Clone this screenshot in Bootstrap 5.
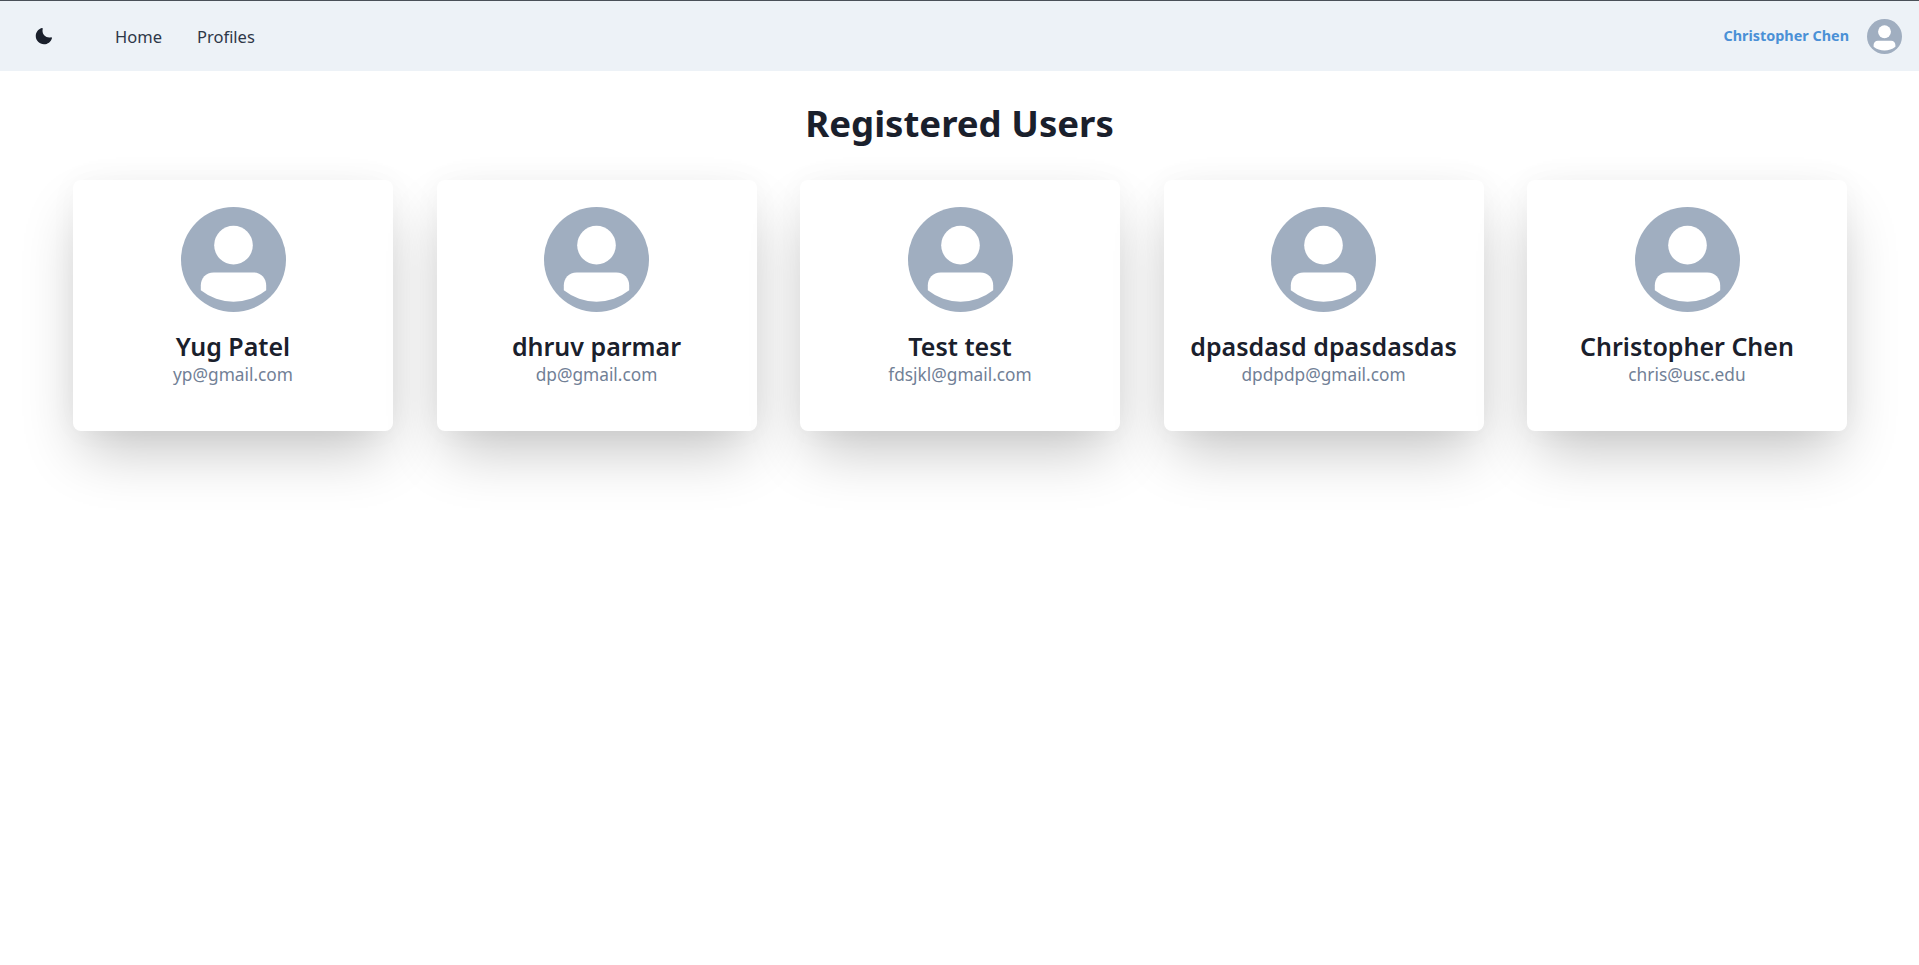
<!DOCTYPE html>
<html lang="en">
<head>
<meta charset="utf-8">
<title>Registered Users</title>
<link href="https://cdn.jsdelivr.net/npm/bootstrap@5.3.0/dist/css/bootstrap.min.css" rel="stylesheet">
<style>
body { font-family: "Noto Sans", "Open Sans", sans-serif; color: #1a202c; background: #fff; }
.top-bar { height: 71px; background: #edf2f7; border-top: 1px solid #4a5058; padding: 0 17px 0 35px; }
.moon { width: 18px; height: 18px; display: block; }
.top-link { color: #2d3748; font-size: 16.5px; text-decoration: none; line-height: 24px; }
.top-links { margin-left: 62px; gap: 35px; padding-top: 2px; }
.me-name { color: #4a90d6; font-size: 14.4px; font-weight: 700; }
.me-pic { width: 35px; height: 35px; display: block; margin-left: 18px; }
.page-title { font-size: 36.6px; font-weight: 700; line-height: 48px; margin: 28px 0 0; color: #1a202c; }
.people { margin-top: 33px; gap: 43.5px; padding-left: 1px; }
.person { width: 320px; height: 251px; background: #fff; border-radius: 8px; padding-top: 27px; box-shadow: 0 28px 56px -10px rgba(0,0,0,.24), 0 0 30px rgba(0,0,0,.03); }
.person-pic { width: 105px; height: 105px; display: block; }
.person-name { font-size: 25px; font-weight: 600; line-height: 32px; margin: 18px 0 0; color: #1a202c; }
.person-mail { font-size: 17.3px; line-height: 24px; color: #718096; margin: 1px 0 0; }
</style>
</head>
<body class="min-vh-100">
<nav class="top-bar d-flex align-items-center">
  <svg class="moon" viewBox="0 0 24 24"><path fill="#1a202c" d="M21.4,13.7C20.6,13.9,19.8,14,19,14c-5,0-9-4-9-9c0-0.8,0.1-1.6,0.3-2.4c0.1-0.3,0-0.7-0.3-1c-0.3-0.3-0.6-0.4-1-0.3C4.3,2.7,1,7.1,1,12c0,6.1,4.9,11,11,11c4.9,0,9.3-3.3,10.6-8.1c0.1-0.3,0-0.7-0.3-1C22.1,13.7,21.7,13.6,21.4,13.7z"/></svg>
  <div class="top-links d-flex">
    <a class="top-link" href="#">Home</a>
    <a class="top-link" href="#">Profiles</a>
  </div>
  <div class="ms-auto d-flex align-items-center">
    <span class="me-name">Christopher Chen</span>
    <svg class="me-pic" viewBox="0 0 106 106"><use href="#avatar"/></svg>
  </div>
</nav>
<svg width="0" height="0" class="position-absolute"><defs><g id="avatar">
  <circle cx="53" cy="53" r="53" fill="#a0aec0"/>
  <circle cx="53" cy="38.5" r="19.5" fill="#fff"/>
  <path fill="#fff" d="M33 66H73C81 66 86 72 86 79V84A53 53 0 0 1 20 84V79C20 72 25 66 33 66Z"/>
</g></defs></svg>
<main>
  <h1 class="page-title text-center">Registered Users</h1>
  <div class="people d-flex justify-content-center">
    <div class="person d-flex flex-column align-items-center"><svg class="person-pic" viewBox="0 0 106 106"><use href="#avatar"/></svg><p class="person-name">Yug Patel</p><p class="person-mail">yp@gmail.com</p></div>
    <div class="person d-flex flex-column align-items-center"><svg class="person-pic" viewBox="0 0 106 106"><use href="#avatar"/></svg><p class="person-name">dhruv parmar</p><p class="person-mail">dp@gmail.com</p></div>
    <div class="person d-flex flex-column align-items-center"><svg class="person-pic" viewBox="0 0 106 106"><use href="#avatar"/></svg><p class="person-name">Test test</p><p class="person-mail">fdsjkl@gmail.com</p></div>
    <div class="person d-flex flex-column align-items-center"><svg class="person-pic" viewBox="0 0 106 106"><use href="#avatar"/></svg><p class="person-name">dpasdasd dpasdasdas</p><p class="person-mail">dpdpdp@gmail.com</p></div>
    <div class="person d-flex flex-column align-items-center"><svg class="person-pic" viewBox="0 0 106 106"><use href="#avatar"/></svg><p class="person-name">Christopher Chen</p><p class="person-mail">chris@usc.edu</p></div>
  </div>
</main>
<script src="https://cdn.jsdelivr.net/npm/bootstrap@5.3.0/dist/js/bootstrap.bundle.min.js"></script>
</body>
</html>
